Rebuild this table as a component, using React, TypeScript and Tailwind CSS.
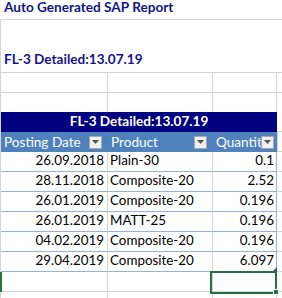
import React from "react";

const ROWS = [
  { date: "26.09.2018", product: "Plain-30", qty: "0.1" },
  { date: "28.11.2018", product: "Composite-20", qty: "2.52" },
  { date: "26.01.2019", product: "Composite-20", qty: "0.196" },
  { date: "26.01.2019", product: "MATT-25", qty: "0.196" },
  { date: "04.02.2019", product: "Composite-20", qty: "0.196" },
  { date: "29.04.2019", product: "Composite-20", qty: "6.097" },
];

function FilterButton() {
  return (
    <span className="flex h-[13px] w-[13px] shrink-0 items-center justify-center border border-[#a6a6a6] bg-[#f0f0f0]">
      <svg width="7" height="4" viewBox="0 0 7 4">
        <path d="M0 0h7L3.5 4z" fill="#555" />
      </svg>
    </span>
  );
}

function HeaderCell({ label, width, gap }: { label: string; width: string; gap: string }) {
  return (
    <div className={`flex h-full items-center ${width} ${gap} pl-[3px]`}>
      <span className="min-w-0 flex-1 overflow-hidden whitespace-nowrap leading-[18px]">{label}</span>
      <FilterButton />
    </div>
  );
}

export default function App() {
  return (
    <div className="relative h-[298px] w-[282px] overflow-hidden bg-white font-['Lato',sans-serif] text-[13.4px] leading-none text-black">
      {/* row 1 */}
      <div className="flex h-[20px] items-end border-b border-[#d4d4d4] pb-[4px] pl-[4px] text-[13.6px] font-bold text-[#14148a]">
        Auto Generated SAP Report
      </div>

      <div className="border-l border-[#d4d4d4]">
        {/* row 2 */}
        <div className="flex h-[53px] items-end border-b border-[#d4d4d4] pb-[5px] pl-[3px] text-[13.6px] font-bold text-[#14148a]">
          FL-3 Detailed:13.07.19
        </div>

        {/* rows 3-4 */}
        {[20, 19].map((h, i) => (
          <div key={i} className={`flex ${h === 20 ? "h-[20px] border-b" : "h-[19px]"} border-[#d4d4d4]`}>
            <div className="w-[107px] border-r border-[#d4d4d4]" />
            <div className="w-[105px] border-r border-[#d4d4d4]" />
            <div className="w-[64px] border-r border-[#d4d4d4]" />
            <div className="flex-1" />
          </div>
        ))}

        {/* table title */}
        <div className="flex h-[20px]">
          <div className="flex w-[276px] items-center justify-center bg-[#000080] text-[13.6px] font-bold text-white">
            FL-3 Detailed:13.07.19
          </div>
          <div className="flex-1 border-b border-[#d4d4d4]" />
        </div>

        {/* header */}
        <div className="flex h-[20px] text-[13.6px] text-white">
          <div className="flex w-[276px] bg-[#4f81bd]">
            <HeaderCell label="Posting Date" width="w-[107px]" gap="pr-[6px]" />
            <HeaderCell label="Product" width="w-[105px]" gap="pr-[6px]" />
            <HeaderCell label="Quantity" width="w-[64px]" gap="pr-[3px]" />
          </div>
          <div className="flex-1 border-b border-l border-[#d4d4d4]" />
        </div>

        {/* data */}
        {ROWS.map((r, i) => (
          <div key={i} className="flex h-[20px]">
            <div className="flex w-[107px] items-end justify-end border-r border-b border-r-[#d4d4d4] border-b-[#95b3d7] pb-[4px] pr-[3px]">
              {r.date}
            </div>
            <div className="flex w-[105px] items-end border-r border-b border-r-[#d4d4d4] border-b-[#95b3d7] pb-[4px] pl-[2px]">
              {r.product}
            </div>
            <div className="flex w-[64px] items-end justify-end border-r border-b border-[#95b3d7] pb-[4px] pr-[2px]">
              {r.qty}
            </div>
            <div className="flex-1 border-b border-[#d4d4d4]" />
          </div>
        ))}

        {/* empty rows */}
        {[0, 1].map((i) => (
          <div key={i} className="flex h-[20px] border-b border-[#d4d4d4]">
            <div className="w-[107px] border-r border-[#d4d4d4]" />
            <div className="w-[105px] border-r border-[#d4d4d4]" />
            <div className="w-[64px] border-r border-[#d4d4d4]" />
            <div className="flex-1" />
          </div>
        ))}
      </div>

      {/* row header highlight */}
      <div className="absolute left-0 top-[272px] h-[20px] w-[2px] bg-[#217346]" />

      {/* table resize handle */}
      <svg className="absolute left-[272px] top-[267px]" width="5" height="5" viewBox="0 0 5 5">
        <path d="M5 0v5H0z" fill="#2f4f8f" />
      </svg>

      {/* selected cell */}
      <div className="absolute left-[210px] top-[271px] h-[23px] w-[67px] border-2 border-[#217346]" />
      <div className="absolute left-[273px] top-[289px] h-[6px] w-[6px] border border-white bg-[#217346]" />
    </div>
  );
}
